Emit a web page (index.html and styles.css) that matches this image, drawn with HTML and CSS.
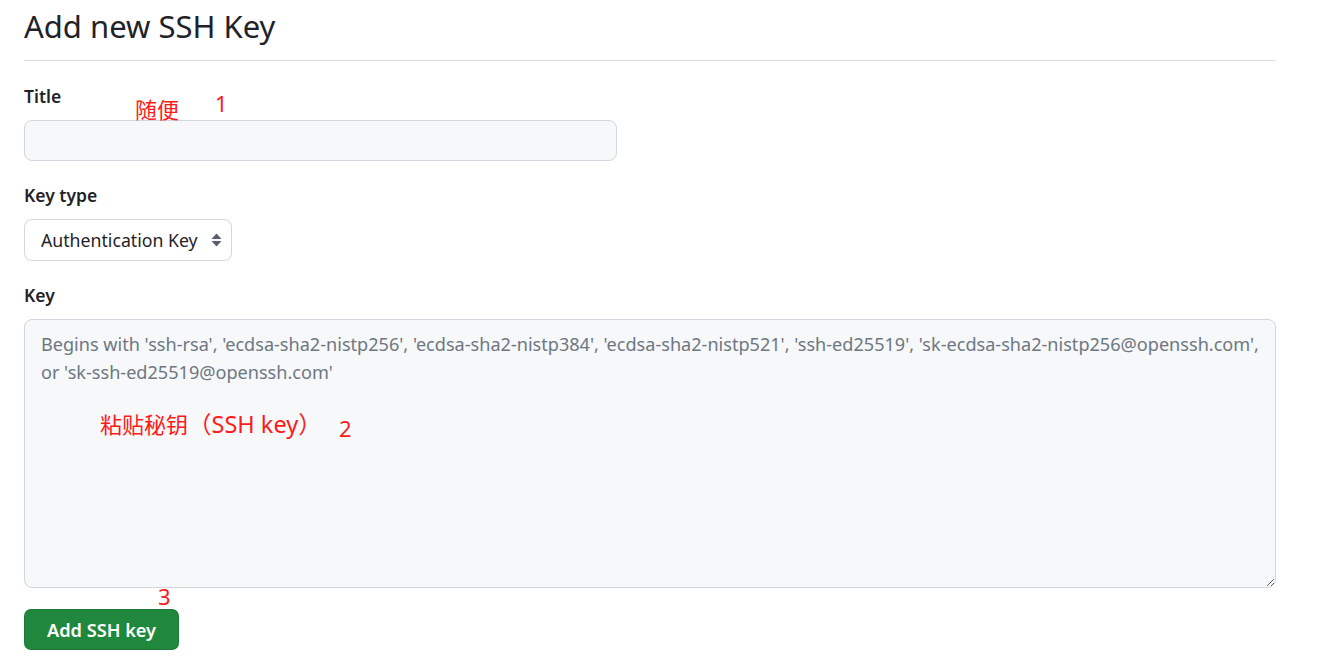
FILE: index.html
```html
<!DOCTYPE html>
<html>
<head>
  <title>Add new SSH Key</title>
  <link rel="stylesheet" href="styles.css">
</head>
<body>
  <div class="page">
    <h2 class="subhead">Add new SSH Key</h2>

    <form class="key-form">
      <div class="form-group">
        <label class="form-label" for="title">Title</label>
        <input class="form-control title-input" id="title" type="text">
        <span class="note note-title">随便</span>
        <span class="note note-one">1</span>
      </div>

      <div class="form-group">
        <label class="form-label" for="type">Key type</label>
        <div class="select-wrap">
          <select class="form-select" id="type">
            <option>Authentication Key</option>
            <option>Signing Key</option>
          </select>
          <svg class="select-arrows" width="11" height="14" viewBox="0 0 11 14">
            <path d="M5.5 0.5 L10.5 6 L0.5 6 Z" fill="#57606a"/>
            <path d="M5.5 13.5 L10.5 8 L0.5 8 Z" fill="#57606a"/>
          </svg>
        </div>
      </div>

      <div class="form-group">
        <label class="form-label" for="key">Key</label>
        <textarea class="form-control key-input" id="key" placeholder="Begins with 'ssh-rsa', 'ecdsa-sha2-nistp256', 'ecdsa-sha2-nistp384', 'ecdsa-sha2-nistp521', 'ssh-ed25519', 'sk-ecdsa-sha2-nistp256@openssh.com', or 'sk-ssh-ed25519@openssh.com'"></textarea>
        <span class="note note-key">粘贴秘钥<span class="note-latin">（SSH key）</span></span>
        <span class="note note-two">2</span>
      </div>

      <div class="form-actions">
        <button class="btn-primary" type="button">Add SSH key</button>
        <span class="note note-three">3</span>
      </div>
    </form>
  </div>
</body>
</html>
```

FILE: styles.css
```css
body {
  margin: 0;
  padding: 0;
  background: #ffffff;
  color: #1f2328;
  font-family: 'Noto Sans', 'Liberation Sans', sans-serif;
}

.page {
  width: 1252px;
  padding-left: 24px;
}

.subhead {
  margin: 0;
  padding-top: 2px;
  height: 58px;
  font-size: 31px;
  font-weight: 400;
  line-height: 48px;
  border-bottom: 1px solid #d8dee4;
}

.key-form {
  padding-top: 22px;
}

.form-group {
  position: relative;
  margin-bottom: 21px;
}

.form-label {
  display: block;
  font-size: 17.5px;
  font-weight: 600;
  line-height: 27px;
  margin-bottom: 10px;
}

.form-control {
  display: block;
  box-sizing: border-box;
  background: #f6f8fa;
  border: 1px solid #d0d7de;
  border-radius: 8px;
  font-family: inherit;
  color: #1f2328;
}

.title-input {
  width: 593px;
  height: 41px;
  font-size: 18px;
  padding: 0 16px;
}

.select-wrap {
  position: relative;
  width: 208px;
}

.form-select {
  appearance: none;
  -webkit-appearance: none;
  box-sizing: border-box;
  width: 208px;
  height: 42px;
  padding: 0 30px 0 16px;
  background: #ffffff;
  border: 1px solid #d0d7de;
  border-radius: 8px;
  font-family: inherit;
  font-size: 17.7px;
  line-height: 40px;
  color: #1f2328;
}

.select-arrows {
  position: absolute;
  right: 10px;
  top: 14px;
}

.key-input {
  width: 1252px;
  height: 269px;
  padding: 10px 16px;
  font-size: 18.1px;
  line-height: 28px;
  resize: vertical;
}

.key-input::placeholder {
  color: #6e7781;
}

.form-actions {
  position: relative;
}

.btn-primary {
  width: 155px;
  height: 41px;
  background: #1f883d;
  color: #ffffff;
  border: 1px solid rgba(31, 35, 40, 0.15);
  border-radius: 7px;
  font-family: inherit;
  font-size: 18.2px;
  font-weight: 600;
}

/* red annotations drawn over the form */
.note {
  position: absolute;
  color: #ff1a1a;
  font-family: 'Noto Sans', 'Noto Sans CJK SC', sans-serif;
  font-size: 22px;
  line-height: 26px;
}

.note-latin {
  font-size: 23.5px;
}

.note-title {
  left: 111px;
  top: 13px;
}

.note-one {
  left: 191px;
  top: 7px;
}

.note-key {
  left: 76px;
  top: 129px;
}

.note-two {
  left: 315px;
  top: 133px;
}

.note-three {
  left: 134px;
  top: -26px;
}
```
